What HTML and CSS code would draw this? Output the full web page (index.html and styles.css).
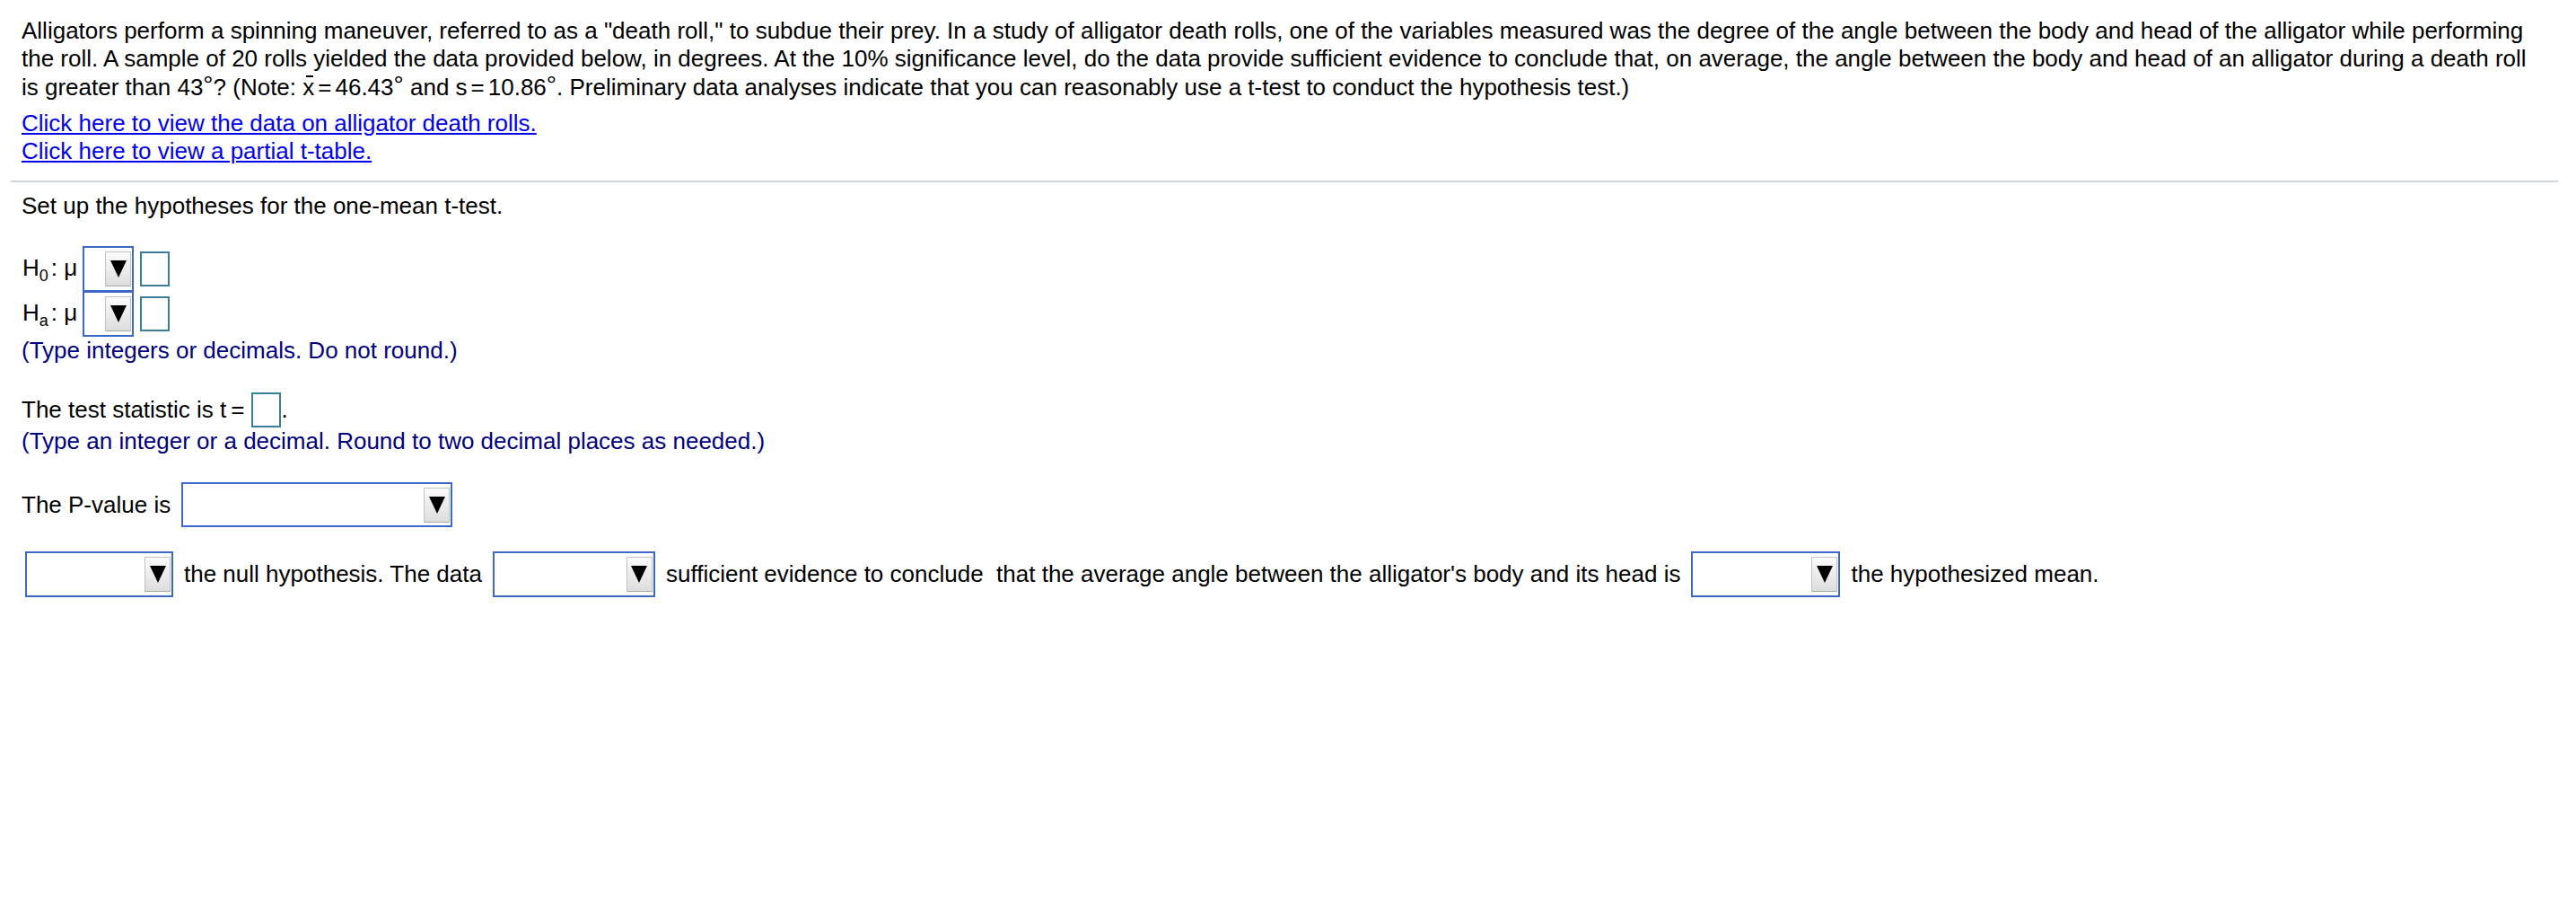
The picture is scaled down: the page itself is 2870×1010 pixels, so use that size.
FILE: index.html
```html
<!DOCTYPE html>
<html lang="en">
<head>
<meta charset="utf-8">
<title>One-mean t-test</title>
<link rel="stylesheet" href="styles.css">
</head>
<body>
<div class="page">
  <div class="stem">
    <p class="problem">Alligators perform a spinning maneuver, referred to as a "death roll," to subdue their prey. In a study of alligator death rolls, one of the variables measured was the degree of the angle between the body and head of the alligator while performing the roll. A sample of 20 rolls yielded the data provided below, in degrees. At the 10% significance level, do the data provide sufficient evidence to conclude that, on average, the angle between the body and head of an alligator during a death roll is greater than 43<span class="deg">°</span>? (Note: <span class="xbar">x</span><span class="eq">=</span>46.43<span class="deg">°</span> and s<span class="eq">=</span>10.86<span class="deg">°</span>. Preliminary data analyses indicate that you can reasonably use a t-test to conduct the hypothesis test.)</p>
    <div class="links">
      <a href="#" class="link">Click here to view the data on alligator death rolls.</a>
      <a href="#" class="link">Click here to view a partial t-table.</a>
    </div>
  </div>
  <hr class="divider">
  <div class="work">
    <p class="prompt">Set up the hypotheses for the one-mean t-test.</p>
    <div class="hyp">
      <div class="hrow">
        <span class="hlabel">H<sub class="sub">0</sub><span class="colon">:</span> μ</span>
        <span class="select sel-op"><span class="btn"><span class="tri"></span></span></span>
        <span class="input"></span>
      </div>
      <div class="hrow">
        <span class="hlabel">H<sub class="sub">a</sub><span class="colon">:</span> μ</span>
        <span class="select sel-op"><span class="btn"><span class="tri"></span></span></span>
        <span class="input"></span>
      </div>
    </div>
    <p class="note">(Type integers or decimals. Do not round.)</p>
    <div class="trow">
      <span>The test statistic is t</span><span class="eq-t">=</span><span class="input input-t"></span><span>.</span>
    </div>
    <p class="note">(Type an integer or a decimal. Round to two decimal places as needed.)</p>
    <div class="prow">
      <span>The P-value is</span>
      <span class="select sel-p"><span class="btn"><span class="tri"></span></span></span>
    </div>
    <div class="crow">
      <span class="select sel-1"><span class="btn"><span class="tri"></span></span></span>
      <span>the null hypothesis. The data</span>
      <span class="select sel-2"><span class="btn"><span class="tri"></span></span></span>
      <span class="ws">sufficient evidence to conclude  that the average angle between the alligator's body and its head is</span>
      <span class="select sel-3"><span class="btn"><span class="tri"></span></span></span>
      <span>the hypothesized mean.</span>
    </div>
  </div>
</div>
</body>
</html>
```
FILE: styles.css
```css
html, body {
  margin: 0;
  background: #ffffff;
}
body {
  font-family: "Liberation Sans", Arial, sans-serif;
  font-size: 26px;
  color: #000000;
}
.page {
  padding: 19px 20px 0 12px;
}
.stem {
  padding-left: 12px;
  padding-right: 18px;
}
.problem {
  margin: 0;
  line-height: 31px;
}
.deg {
  font-size: 28px;
  vertical-align: 0.08em;
  line-height: 1;
}
.xbar {
  position: relative;
  display: inline-block;
  line-height: 1;
}
.xbar::before {
  content: "";
  position: absolute;
  left: 4px;
  top: 0;
  width: 8px;
  height: 2px;
  background: #000;
}
.eq {
  margin: 0 4px;
}
.eq-t {
  margin: 0 8px 0 5px;
}
.links {
  margin-top: 9px;
  line-height: 31px;
  display: flex;
  flex-direction: column;
  align-items: flex-start;
}
.link {
  color: #0000ee;
  text-decoration: underline;
}
.divider {
  border: 0;
  border-top: 2px solid #cfd3de;
  height: 0;
  margin: 17px 0 0;
}
.work {
  padding-left: 12px;
  line-height: 31px;
}
.prompt {
  margin: 11px 0 0;
}
.hyp {
  margin-top: 29px;
}
.hrow {
  display: flex;
  align-items: center;
  height: 51px;
}
.hrow + .hrow {
  margin-top: -1px;
}
.hlabel {
  margin-left: 1px;
}
.sub {
  font-size: 18px;
  vertical-align: -6px;
  line-height: 1;
}
.colon {
  margin-left: 3px;
}
.select {
  box-sizing: border-box;
  display: inline-flex;
  justify-content: flex-end;
  align-items: center;
  border: 2px solid #3c68c8;
  background: #ffffff;
  padding-right: 1px;
}
.btn {
  box-sizing: border-box;
  width: 29px;
  height: 39px;
  border: 1px solid #c2c2c2;
  border-bottom-color: #a9a9a9;
  background: linear-gradient(#fbfbfb, #dddddd);
  display: flex;
  align-items: center;
  justify-content: center;
}
.tri {
  width: 0;
  height: 0;
  border-left: 9px solid transparent;
  border-right: 9px solid transparent;
  border-top: 19px solid #000000;
}
.sel-op {
  width: 57px;
  height: 51px;
  margin-left: 6px;
}
.input {
  box-sizing: border-box;
  display: inline-block;
  width: 33px;
  height: 39px;
  border: 2px solid #3a7e9b;
  background: #ffffff;
  margin-left: 7px;
}
.note {
  margin: 0;
  color: #000080;
}
.trow {
  display: flex;
  align-items: center;
  height: 39px;
  margin-top: 31px;
}
.input-t {
  margin-left: 0;
}
.prow {
  display: flex;
  align-items: center;
  height: 50px;
  margin-top: 30px;
}
.sel-p {
  width: 302px;
  height: 50px;
  margin-left: 12px;
}
.crow {
  display: flex;
  align-items: center;
  height: 51px;
  margin-top: 27px;
  margin-left: 4px;
}
.ws {
  white-space: pre;
}
.sel-1 {
  width: 165px;
  height: 51px;
  margin-right: 12px;
}
.sel-2 {
  width: 181px;
  height: 51px;
  margin: 0 12px;
}
.sel-3 {
  width: 166px;
  height: 51px;
  margin: 0 12px;
}
```
